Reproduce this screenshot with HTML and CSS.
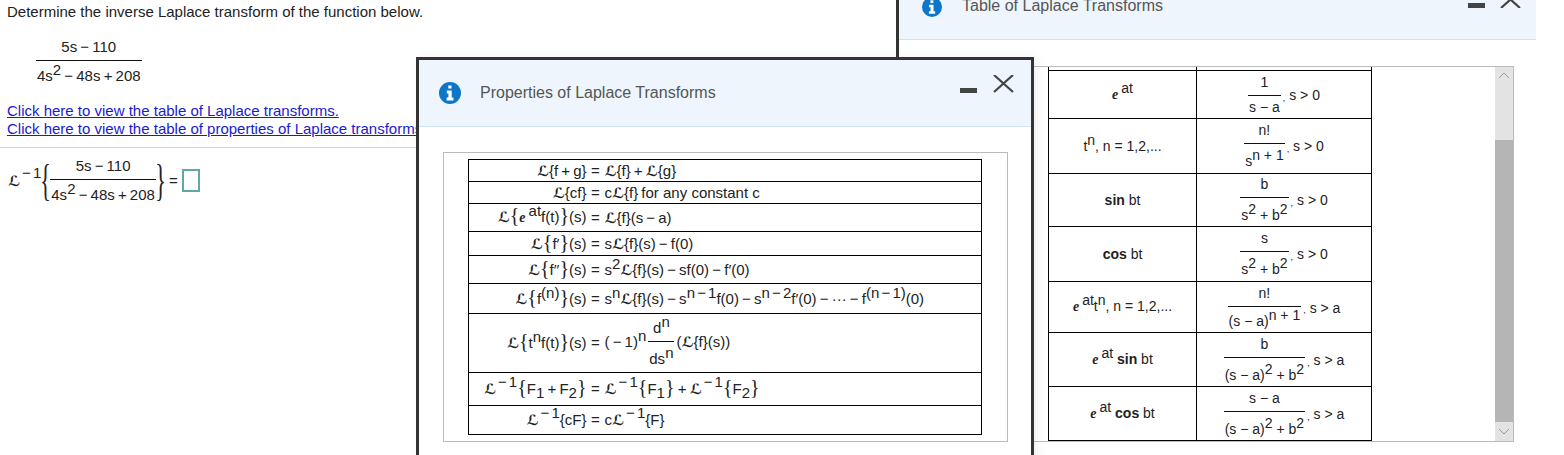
FILE: index.html
```html
<!DOCTYPE html>
<html lang="en">
<head>
<meta charset="utf-8">
<title>Inverse Laplace transform</title>
<link rel="stylesheet" href="styles.css">
</head>
<body>
<main class="question">
  <p class="prompt">Determine the inverse Laplace transform of the function below.</p>
  <div class="given">
    <span class="frac q"><span class="num">5s − 110</span><span class="den">4s<sup>2</sup> − 48s + 208</span></span>
  </div>
  <div class="links">
    <a href="#">Click here to view the table of Laplace transforms.</a>
    <a href="#">Click here to view the table of properties of Laplace transforms.</a>
  </div>
  <div class="answer">
    <span class="sl">ℒ</span><sup class="inv">− 1</sup>
    <span class="bigbrace">{</span>
    <span class="frac q"><span class="num">5s − 110</span><span class="den">4s<sup>2</sup> − 48s + 208</span></span>
    <span class="bigbrace">}</span>
    <span class="eq">=</span>
    <span class="answer-box"></span>
  </div>
</main>

<section class="window back">
  <header class="win-head">
    <svg class="info" viewBox="0 0 22 22"><circle cx="11" cy="11" r="11" fill="#0e76c8"/><path fill="#fff" d="M9.3 3.6h3.2v3H9.3zM7.8 8.6h4.9v7h1.8v2.8H7.6v-2.8h1.8v-4.2H7.8z"/></svg>
    <h2>Table of Laplace Transforms</h2>
    <svg class="ctrl" viewBox="0 0 54 18"><rect x="0" y="13" width="17" height="5" fill="#444"/><path d="M33 1l19 17M52 1L33 18" stroke="#444" stroke-width="2.2" fill="none"/></svg>
  </header>
  <div class="scrollbox">
    <div class="scrollview">
      <table class="transforms">
        <tr class="cut"><td></td><td></td></tr>
        <tr class="t48"><td><span class="e">e</span><sup class="at">at</sup></td><td><span class="frac"><span class="num">1</span><span class="den">s − a</span></span><span class="cm">,</span> <span class="cond">s &gt; 0</span></td></tr>
        <tr class="t55"><td>t<sup>n</sup>, n = 1,2,...</td><td><span class="frac"><span class="num">n!</span><span class="den lo">s<sup>n + 1</sup></span></span><span class="cm">,</span> <span class="cond">s &gt; 0</span></td></tr>
        <tr class="t53"><td><b>sin</b> bt</td><td><span class="frac"><span class="num">b</span><span class="den lo">s<sup>2</sup> + b<sup>2</sup></span></span><span class="cm">,</span> <span class="cond">s &gt; 0</span></td></tr>
        <tr class="t55"><td><b>cos</b> bt</td><td><span class="frac"><span class="num">s</span><span class="den lo">s<sup>2</sup> + b<sup>2</sup></span></span><span class="cm">,</span> <span class="cond">s &gt; 0</span></td></tr>
        <tr class="t51"><td><span class="e">e</span><sup class="at">at</sup>t<sup>n</sup>, n = 1,2,...</td><td><span class="frac"><span class="num">n!</span><span class="den mid">(s − a)<sup>n + 1</sup></span></span><span class="cm">,</span> <span class="cond">s &gt; a</span></td></tr>
        <tr class="t54"><td><span class="e">e</span><sup class="at">at</sup> <b>sin</b> bt</td><td><span class="frac"><span class="num">b</span><span class="den lo">(s − a)<sup>2</sup> + b<sup>2</sup></span></span><span class="cm">,</span> <span class="cond">s &gt; a</span></td></tr>
        <tr class="t54"><td><span class="e">e</span><sup class="at">at</sup> <b>cos</b> bt</td><td><span class="frac"><span class="num">s − a</span><span class="den lo">(s − a)<sup>2</sup> + b<sup>2</sup></span></span><span class="cm">,</span> <span class="cond">s &gt; a</span></td></tr>
      </table>
    </div>
    <div class="scrollbar">
      <div class="sb-btn"><svg viewBox="0 0 12 7"><path d="M1 6l5-5 5 5" fill="none" stroke="#999"/></svg></div>
      <div class="sb-track"></div>
      <div class="sb-thumb"></div>
      <div class="sb-end"><svg viewBox="0 0 12 7"><path d="M1 1l5 5 5-5" fill="none" stroke="#999"/></svg></div>
    </div>
  </div>
</section>

<section class="window front">
  <header class="win-head">
    <svg class="info" viewBox="0 0 22 22"><circle cx="11" cy="11" r="11" fill="#0e76c8"/><path fill="#fff" d="M9.3 3.6h3.2v3H9.3zM7.8 8.6h4.9v7h1.8v2.8H7.6v-2.8h1.8v-4.2H7.8z"/></svg>
    <h2>Properties of Laplace Transforms</h2>
    <svg class="ctrl" viewBox="0 0 54 18"><rect x="0" y="13" width="17" height="5" fill="#444"/><path d="M34 0l19 17M53 0L34 17" stroke="#444" stroke-width="2.2" fill="none"/></svg>
  </header>
  <div class="propbox">
    <table class="props">
      <tr class="p22"><td class="l"><span class="sl">ℒ</span>{f + g}</td><td class="m">=</td><td class="r"><span class="sl">ℒ</span>{f} + <span class="sl">ℒ</span>{g}</td></tr>
      <tr class="p22"><td class="l"><span class="sl">ℒ</span>{cf}</td><td class="m">=</td><td class="r">c<span class="sl">ℒ</span>{f} <span class="words">for any constant c</span></td></tr>
      <tr class="p28"><td class="l"><span class="sl">ℒ</span><span class="br">{</span><span class="e">e</span><sup class="at">at</sup>f(t)<span class="br">}</span>(s)</td><td class="m">=</td><td class="r"><span class="sl">ℒ</span>{f}(s − a)</td></tr>
      <tr class="p24"><td class="l"><span class="sl">ℒ</span><span class="br">{</span>f′<span class="br">}</span>(s)</td><td class="m">=</td><td class="r">s<span class="sl">ℒ</span>{f}(s) − f(0)</td></tr>
      <tr class="p28"><td class="l"><span class="sl">ℒ</span><span class="br">{</span>f′′<span class="br">}</span>(s)</td><td class="m">=</td><td class="r">s<sup>2</sup><span class="sl">ℒ</span>{f}(s) − sf(0) − f′(0)</td></tr>
      <tr class="p30"><td class="l"><span class="sl">ℒ</span><span class="br">{</span>f<sup>(n)</sup><span class="br">}</span>(s)</td><td class="m">=</td><td class="r">s<sup>n</sup><span class="sl">ℒ</span>{f}(s) − s<sup>n − 1</sup>f(0) − s<sup>n − 2</sup>f′(0) − ··· − f<sup>(n − 1)</sup>(0)</td></tr>
      <tr class="p59"><td class="l"><span class="sl">ℒ</span><span class="br">{</span>t<sup>n</sup>f(t)<span class="br">}</span>(s)</td><td class="m">=</td><td class="r">( − 1)<sup>n</sup><span class="frac"><span class="num">d<sup>n</sup></span><span class="den lo">ds<sup>n</sup></span></span>(<span class="sl">ℒ</span>{f}(s))</td></tr>
      <tr class="p33"><td class="l"><span class="sl">ℒ</span><sup class="inv">− 1</sup><span class="br">{</span>F<sub>1</sub> + F<sub>2</sub><span class="br">}</span></td><td class="m">=</td><td class="r"><span class="sl">ℒ</span><sup class="inv">− 1</sup><span class="br">{</span>F<sub>1</sub><span class="br">}</span> + <span class="sl">ℒ</span><sup class="inv">− 1</sup><span class="br">{</span>F<sub>2</sub><span class="br">}</span></td></tr>
      <tr class="p29"><td class="l"><span class="sl">ℒ</span><sup class="inv">− 1</sup>{cF}</td><td class="m">=</td><td class="r">c<span class="sl">ℒ</span><sup class="inv">− 1</sup>{F}</td></tr>
    </table>
  </div>
</section>
</body>
</html>
```

FILE: styles.css
```css
* { box-sizing: border-box; }
html, body { margin: 0; height: 100%; }
body {
  position: relative;
  width: 1564px;
  height: 455px;
  overflow: hidden;
  background: #fff;
  color: #222;
  font: 15px/16px "Liberation Sans", Arial, sans-serif;
}
sup, sub { font-size: 1em; line-height: 0; }
sup { vertical-align: 6px; }
sub { vertical-align: -4px; }

.question { width: 416px; }
.prompt { margin: 0; padding: 4px 0 0 7px; white-space: nowrap; }

.frac {
  display: inline-flex;
  flex-direction: column;
  align-items: stretch;
  vertical-align: middle;
  text-align: center;
}
.frac .num { border-bottom: 1px solid #111; padding: 0 1px 5px; }
.frac .den { padding: 3px 1px 0; }
.frac .den.lo { padding-top: 9px; }
.frac .den.mid { padding-top: 6px; }
.frac.q { word-spacing: -1px; }
.frac.q .num { padding-bottom: 5px; }
.frac.q .den { padding: 7px 1px 0; }

.given { margin: 19px 0 0 36px; }

.links { margin-top: 18px; width: 440px; white-space: nowrap; }
.links a {
  display: block;
  margin-left: 7px;
  color: #1a1ad0;
  line-height: 18px;
}

.answer {
  display: flex;
  align-items: center;
  width: 416px;
  margin-top: 9px;
  padding: 10px 0 0 8px;
  border-top: 1px solid #d5d5d5;
}
.answer .inv { position: relative; top: -8px; margin: 0 0 0 2px; line-height: 16px; word-spacing: -2px; }
.bigbrace {
  display: flex;
  justify-content: center;
  font: 44px/44px "Liberation Serif", serif;
  transform: scaleX(.5);
  width: 9px;
}
.answer .eq { margin: 0 4px 0 4px; }
.answer-box {
  width: 18px;
  height: 23px;
  border: 2px solid #5fa8a8;
}

.sl { font-family: "DejaVu Sans", serif; font-size: 14px; font-style: italic; font-weight: 700; }
.e { font: italic bold 14px "Liberation Serif", serif; }
.at { margin-left: 3px; }
.inv { margin-left: 2px; vertical-align: 7px; }
.br { font: 20px/0 "Liberation Serif", serif; }
.cm { font-size: 9px; margin-left: 2px; vertical-align: -3px; }
.cond { vertical-align: -2px; }

.window { position: absolute; background: #fff; }
.win-head {
  display: flex;
  align-items: center;
  background: #eff5fc;
  border-bottom: 1px solid #d0e3f3;
}
.win-head h2 {
  margin: 0 auto 0 0;
  color: #555;
  font: 400 16px/20px "Liberation Sans", Arial, sans-serif;
}
.info { width: 22px; height: 22px; flex: none; }
.ctrl { width: 54px; height: 18px; flex: none; align-self: flex-start; }

.back {
  left: 896px;
  top: -30px;
  width: 640px;
  height: 500px;
  border-left: 3px solid #333;
}
.back .win-head { height: 70px; padding: 0 14px 0 23px; }
.back .info { width: 20px; height: 20px; margin-top: 4px; }
.back h2 { margin-left: 20px; margin-top: 2px; }
.back .ctrl { margin-top: 20px; }

.scrollbox {
  display: flex;
  width: 592px;
  height: 376px;
  margin: 26px 0 0 23px;
  border: 1px solid #bbb;
}
.scrollview { flex: 1; padding-left: 125px; overflow: hidden; }
.transforms {
  width: 324px;
  table-layout: fixed;
  border-collapse: collapse;
  text-align: center;
  font-size: 14px;
}
.transforms td { padding: 0; border: 1px solid #000; white-space: nowrap; }
.transforms td:first-child { width: 148px; }
.cut td { height: 3px; border-top: 0; }
.t48 { height: 48px; }
.t51 { height: 51px; }
.t53 { height: 53px; }
.t54 { height: 54px; }
.t55 { height: 55px; }

.scrollbar { width: 18px; display: flex; flex-direction: column; background: #e3e3e3; }
.sb-btn { height: 17px; display: flex; align-items: center; justify-content: center; }
.sb-track { height: 56px; }
.sb-thumb { height: 282px; background: #b5b5b5; }
.sb-end { flex: 1; display: flex; align-items: center; justify-content: center; }
.scrollbar svg { width: 12px; height: 7px; }

.front {
  left: 416px;
  top: 57px;
  width: 618px;
  height: 420px;
  border: 3px solid #333;
  box-shadow: 4px 0 10px rgba(0, 0, 0, .06);
}
.front .win-head { height: 67px; padding: 0 17px 0 20px; }
.front h2 { margin-left: 19px; }
.front .ctrl { margin-top: 15px; }

.propbox {
  width: 565px;
  margin: 25px 0 0 24px;
  padding: 6px 24px 6px 24px;
  border: 1px solid #bbb;
}
.props { width: 514px; border-collapse: collapse; table-layout: fixed; word-spacing: -1px; }
.props tr { border: 1px solid #000; }
.props td { padding: 0; white-space: nowrap; }
.props .l { width: 118px; text-align: right; }
.props .m { width: 18px; text-align: center; }
.props sup { word-spacing: -2px; }
.props .frac { margin: 0 2px; }
.words { word-spacing: 0; }
.p22 { height: 22px; }
.p24 { height: 24px; }
.p28 { height: 28px; }
.p29 { height: 29px; }
.p30 { height: 30px; }
.p33 { height: 33px; }
.p59 { height: 59px; }
```
